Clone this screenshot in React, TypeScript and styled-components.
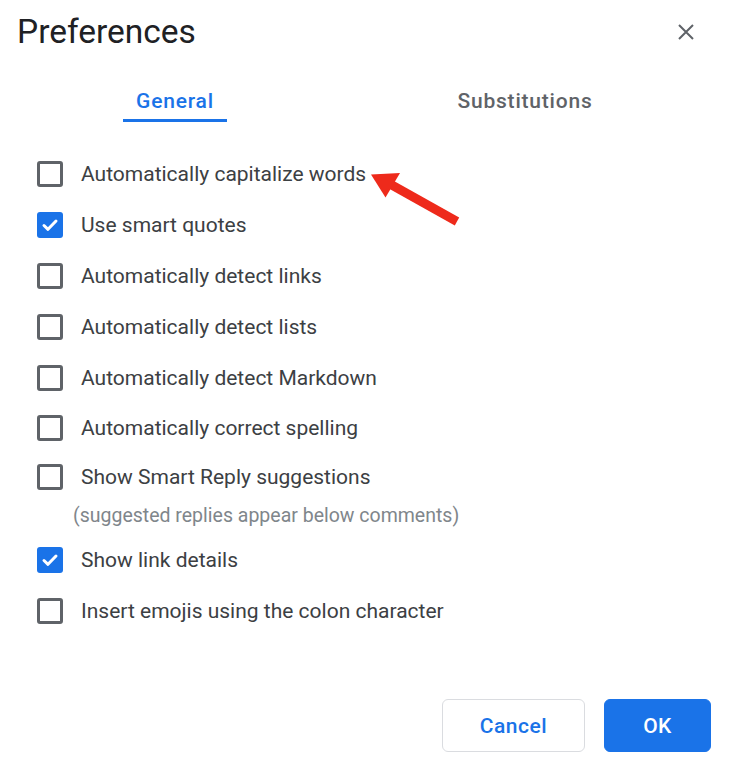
import React from "react";
import styled, { createGlobalStyle } from "styled-components";

const Global = createGlobalStyle`
  html, body { margin: 0; padding: 0; background: #ffffff; }
  body { font-family: Roboto, "Noto Sans", Arial, sans-serif; }
  * { box-sizing: border-box; }
`;

const Dialog = styled.div`
  position: relative;
  width: 734px;
  height: 771px;
  display: flex;
  flex-direction: column;
  background: #fff;
`;

const Header = styled.div`
  display: flex;
  align-items: center;
  justify-content: space-between;
  padding: 13px 38px 0 17px;
  height: 50px;
`;

const Title = styled.h1`
  margin: 0;
  font-size: 33.5px;
  line-height: 38px;
  font-weight: 400;
  color: #202124;
`;

const CloseButton = styled.button`
  width: 20px;
  height: 20px;
  padding: 0;
  border: 0;
  background: transparent;
  display: flex;
  align-items: center;
  justify-content: center;
  cursor: pointer;
`;

const TabBar = styled.div`
  display: flex;
  margin-top: 39px;
  width: 700px;
`;

const TabCell = styled.div`
  flex: 1;
  display: flex;
  justify-content: center;
`;

const Tab = styled.div<{ $active?: boolean }>`
  padding: 0 13px 6px;
  font-size: 21px;
  line-height: 24px;
  font-weight: 500;
  letter-spacing: 0.8px;
  color: ${(p) => (p.$active ? "#1a73e8" : "#5f6368")};
  border-bottom: 3px solid ${(p) => (p.$active ? "#1a73e8" : "transparent")};
`;

const List = styled.div`
  display: flex;
  flex-direction: column;
  margin-top: 27px;
  padding-left: 37px;
`;

const Row = styled.label<{ $h?: number }>`
  display: flex;
  align-items: center;
  gap: 18px;
  height: ${(p) => p.$h ?? 50.8}px;
  font-size: 21px;
  color: #3c4043;
  cursor: pointer;
`;

const Box = styled.span<{ $checked?: boolean }>`
  width: 26px;
  height: 26px;
  flex: none;
  border-radius: 3px;
  display: flex;
  align-items: center;
  justify-content: center;
  background: ${(p) => (p.$checked ? "#1a73e8" : "#fff")};
  border: ${(p) => (p.$checked ? "none" : "3px solid #5f6368")};
`;

const Hint = styled.div`
  margin: 3px 0 7px -37px;
  padding-left: 73px;
  font-size: 19.5px;
  line-height: 24px;
  color: #80868b;
`;

const Footer = styled.div`
  margin-top: auto;
  display: flex;
  justify-content: flex-end;
  gap: 19px;
  padding: 0 23px 19px 0;
`;

const Button = styled.button<{ $primary?: boolean }>`
  height: 53px;
  border-radius: 6px;
  font-family: inherit;
  font-size: 21px;
  font-weight: 500;
  letter-spacing: 0.5px;
  cursor: pointer;
  padding: 0;
  width: ${(p) => (p.$primary ? 107 : 143)}px;
  color: ${(p) => (p.$primary ? "#fff" : "#1a73e8")};
  background: ${(p) => (p.$primary ? "#1a73e8" : "#fff")};
  border: 1px solid ${(p) => (p.$primary ? "#1a73e8" : "#dadce0")};
`;

const Annotation = styled.svg`
  position: absolute;
  left: 0;
  top: 0;
  pointer-events: none;
`;

const Check = () => (
  <svg width="18" height="18" viewBox="0 0 18 18">
    <path d="M3 9.5 L7 13.3 L15 5" fill="none" stroke="#fff" strokeWidth="3" strokeLinecap="round" strokeLinejoin="round" />
  </svg>
);

type Item = { label: string; checked?: boolean; hint?: string };

const items: Item[] = [
  { label: "Automatically capitalize words" },
  { label: "Use smart quotes", checked: true },
  { label: "Automatically detect links" },
  { label: "Automatically detect lists" },
  { label: "Automatically detect Markdown" },
  { label: "Automatically correct spelling" },
  { label: "Show Smart Reply suggestions", hint: "(suggested replies appear below comments)" },
  { label: "Show link details", checked: true },
  { label: "Insert emojis using the colon character" },
];

export default function App() {
  return (
    <>
      <Global />
      <Dialog>
        <Header>
          <Title>Preferences</Title>
          <CloseButton aria-label="Close">
            <svg width="16" height="16" viewBox="0 0 16 16">
              <path d="M1 1 L15 15 M15 1 L1 15" stroke="#5f6368" strokeWidth="2" fill="none" />
            </svg>
          </CloseButton>
        </Header>
        <TabBar>
          <TabCell>
            <Tab $active>General</Tab>
          </TabCell>
          <TabCell>
            <Tab>Substitutions</Tab>
          </TabCell>
        </TabBar>
        <List>
          {items.map((it) => (
            <React.Fragment key={it.label}>
              <Row $h={it.hint ? 47 : 50.8}>
                <Box $checked={it.checked}>{it.checked && <Check />}</Box>
                <span>{it.label}</span>
              </Row>
              {it.hint && <Hint>{it.hint}</Hint>}
            </React.Fragment>
          ))}
        </List>
        <Footer>
          <Button>Cancel</Button>
          <Button $primary>OK</Button>
        </Footer>
        <Annotation width="734" height="771">
          <line x1="390" y1="184" x2="457" y2="221.5" stroke="#ee2a1b" strokeWidth="9" />
          <polygon points="371,174.5 400,173 385.5,197.5" fill="#ee2a1b" />
        </Annotation>
      </Dialog>
    </>
  );
}
